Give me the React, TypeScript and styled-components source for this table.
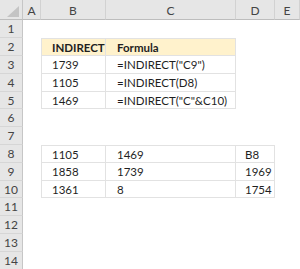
import React from "react";
import styled, { createGlobalStyle } from "styled-components";

const GlobalStyle = createGlobalStyle`
  html, body {
    margin: 0;
    padding: 0;
    background: #ffffff;
    overflow: hidden;
  }
  body {
    font-family: Lato, "Open Sans", "Liberation Sans", sans-serif;
  }
`;

const COLUMNS = ["A", "B", "C", "D", "E"];
const ROW_HEIGHTS = [18, 18, 18, 18, 17, 18, 18, 18, 18, 17, 18, 18, 18, 18];
// left indent of cell text per column
const INDENT: Record<string, number> = { B: 11, C: 11, D: 9 };

type Cell = { text: string; head?: boolean };

// table contents keyed by row number, then column letter
const CELLS: Record<number, Record<string, Cell>> = {
  2: { B: { text: "INDIRECT", head: true }, C: { text: "Formula", head: true } },
  3: { B: { text: "1739" }, C: { text: '=INDIRECT("C9")' } },
  4: { B: { text: "1105" }, C: { text: "=INDIRECT(D8)" } },
  5: { B: { text: "1469" }, C: { text: '=INDIRECT("C"&C10)' } },
  8: { B: { text: "1105" }, C: { text: "1469" }, D: { text: "B8" } },
  9: { B: { text: "1858" }, C: { text: "1739" }, D: { text: "1969" } },
  10: { B: { text: "1361" }, C: { text: "8" }, D: { text: "1754" } },
};

const TABLE_TOP_ROWS = [2, 8];

const Sheet = styled.div`
  display: grid;
  grid-template-columns: 23px 18px 65px 130px 39px 1fr;
  grid-template-rows: 20px ${ROW_HEIGHTS.map((h) => `${h}px`).join(" ")};
  width: 300px;
  height: 269px;
  overflow: hidden;
  font-size: 11.5px;
  color: #1f1f1f;
`;

const Corner = styled.div`
  background: #e6e6e6;
  border-right: 1px solid #c6c6c6;
  border-bottom: 1px solid #bdbdbd;
  box-sizing: border-box;
  display: flex;
  align-items: flex-end;
  justify-content: flex-end;
  padding: 0 3px 2px 0;
`;

const CornerMark = styled.div`
  width: 0;
  height: 0;
  border-left: 12px solid transparent;
  border-bottom: 11px solid #c4c4c4;
`;

const ColHeader = styled.div`
  background: #e6e6e6;
  border-right: 1px solid #d2d2d2;
  border-bottom: 1px solid #bdbdbd;
  box-sizing: border-box;
  display: flex;
  align-items: center;
  justify-content: center;
  color: #444444;
  font-size: 12px;
  padding-top: 1px;
`;

const RowHeader = styled.div`
  background: #e6e6e6;
  border-right: 1px solid #c6c6c6;
  border-bottom: 1px solid #d6d6d6;
  box-sizing: border-box;
  display: flex;
  align-items: center;
  justify-content: center;
  color: #444444;
  font-size: 12px;
`;

const Blank = styled.div`
  background: #ffffff;
`;

const DataCell = styled.div<{
  $head?: boolean;
  $left?: boolean;
  $top?: boolean;
  $indent: number;
}>`
  background: ${({ $head }) => ($head ? "#fff2cc" : "#ffffff")};
  font-weight: ${({ $head }) => ($head ? 700 : 400)};
  border-right: 1px solid #e2e2e2;
  border-bottom: 1px solid #e2e2e2;
  border-left: ${({ $left }) => ($left ? "1px solid #e2e2e2" : "none")};
  border-top: ${({ $top }) => ($top ? "1px solid #e2e2e2" : "none")};
  box-sizing: border-box;
  display: flex;
  align-items: center;
  padding-left: ${({ $indent }) => $indent}px;
  white-space: nowrap;
`;

export default function App() {
  const rows = ROW_HEIGHTS.map((_, i) => i + 1);

  return (
    <>
      <GlobalStyle />
      <Sheet>
        <Corner>
          <CornerMark />
        </Corner>
        {COLUMNS.map((c) => (
          <ColHeader key={c}>{c}</ColHeader>
        ))}
        {rows.map((r) => (
          <React.Fragment key={r}>
            <RowHeader>{r}</RowHeader>
            {COLUMNS.map((c) => {
              const cell = CELLS[r]?.[c];
              if (!cell) return <Blank key={c} />;
              return (
                <DataCell
                  key={c}
                  $head={cell.head}
                  $left={c === "B"}
                  $top={TABLE_TOP_ROWS.includes(r)}
                  $indent={INDENT[c] - (c === "B" ? 1 : 0)}
                >
                  {cell.text}
                </DataCell>
              );
            })}
          </React.Fragment>
        ))}
      </Sheet>
    </>
  );
}
